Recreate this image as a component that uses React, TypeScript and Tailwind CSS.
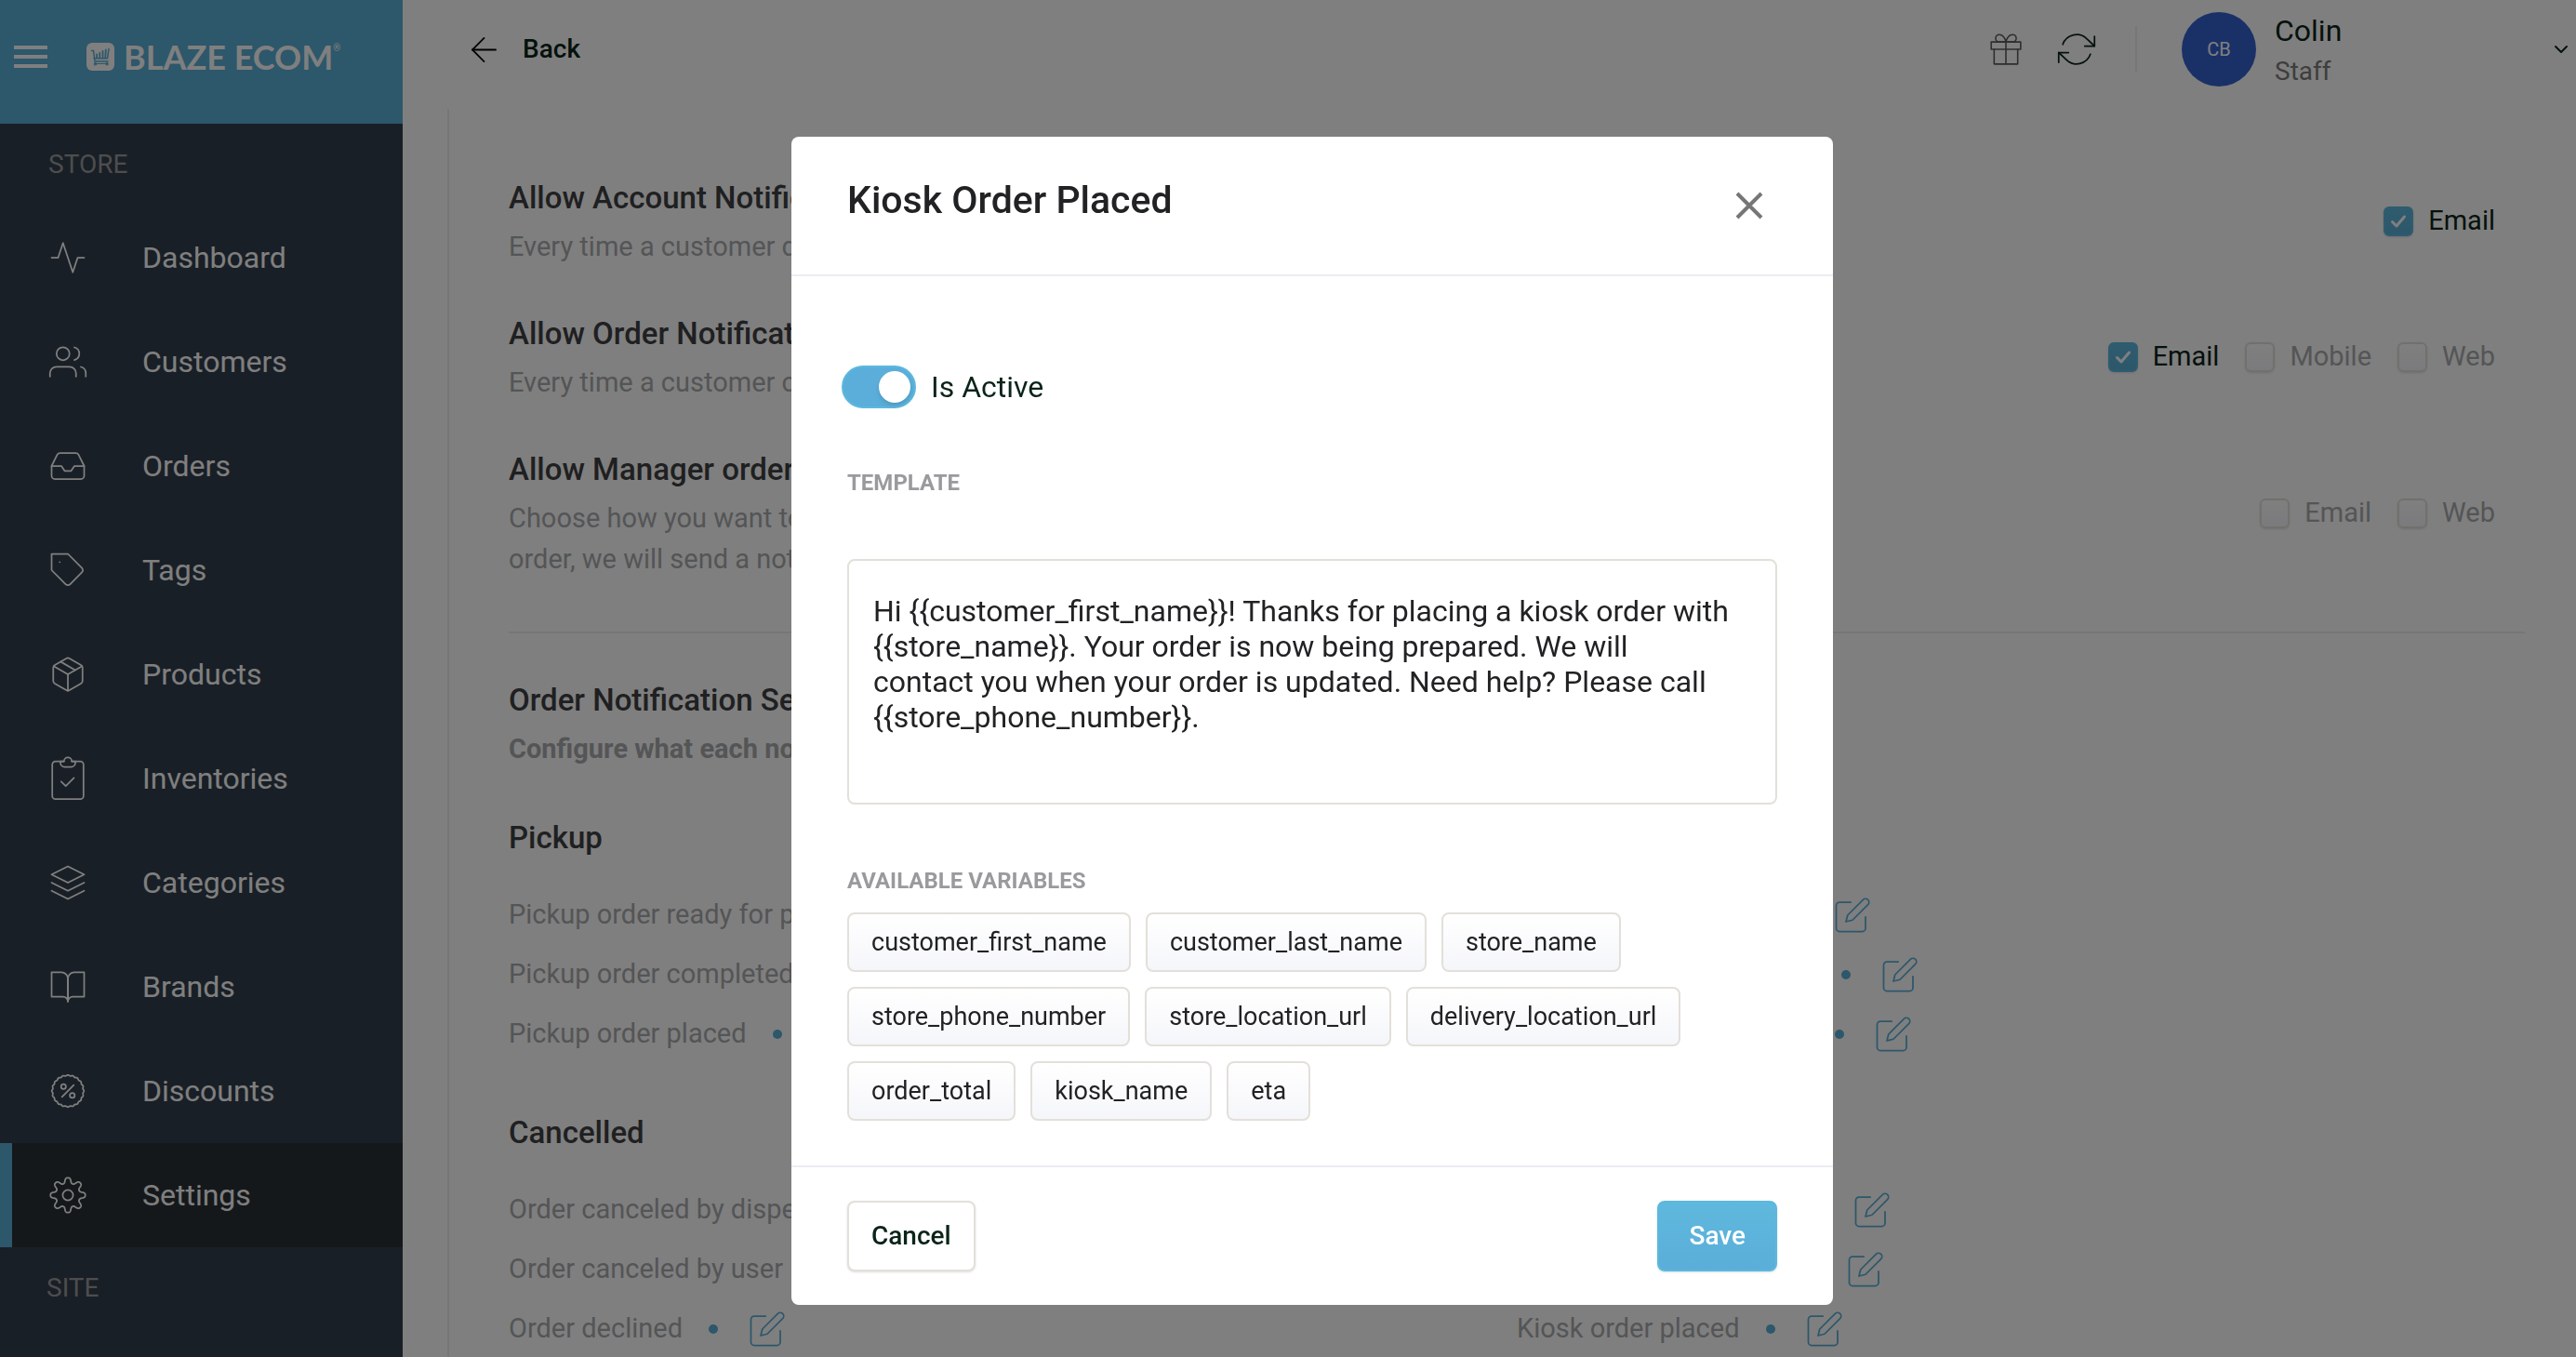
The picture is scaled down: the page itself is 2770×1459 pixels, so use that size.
import React, { useState } from "react";
import {
  FiActivity,
  FiArrowLeft,
  FiBookOpen,
  FiChevronDown,
  FiEdit,
  FiGift,
  FiInbox,
  FiLayers,
  FiPackage,
  FiRefreshCw,
  FiTag,
  FiUsers,
} from "react-icons/fi";

interface IconProps {
  className?: string;
  strokeWidth?: number;
}

interface Option {
  label: string;
  checked: boolean;
}

// closed wave around the centre of a 24x24 box, used for the gear and the badge outline
const wavePath = (teeth: number, radius: number, depth: number, sharpness: number) => {
  const steps = 240;
  const points: string[] = [];
  for (let i = 0; i < steps; i++) {
    const angle = (i / steps) * Math.PI * 2;
    const wave = Math.tanh(sharpness * Math.cos(teeth * angle)) / Math.tanh(sharpness);
    const r = radius + depth * wave;
    points.push(`${(12 + r * Math.sin(angle)).toFixed(2)} ${(12 - r * Math.cos(angle)).toFixed(2)}`);
  }
  return `M${points.join("L")}Z`;
};

const gearPath = wavePath(8, 9.1, 1.6, 1.5);
const badgePath = wavePath(20, 9.6, 0.25, 1);

function GearIcon({ className, strokeWidth = 1 }: IconProps) {
  return (
    <svg viewBox="0 0 24 24" fill="none" stroke="currentColor" strokeWidth={strokeWidth} strokeLinejoin="round" className={className}>
      <path d={gearPath} />
      <circle cx="12" cy="12" r="3.2" />
    </svg>
  );
}

function DiscountIcon({ className, strokeWidth = 1 }: IconProps) {
  return (
    <svg viewBox="0 0 24 24" fill="none" stroke="currentColor" strokeWidth={strokeWidth} strokeLinecap="round" className={className}>
      <path d={badgePath} />
      <path d="M8.4 15.6L15.6 8.4" />
      <circle cx="9.3" cy="9.3" r="1.5" />
      <circle cx="14.7" cy="14.7" r="1.5" />
    </svg>
  );
}

function ClipboardIcon({ className, strokeWidth = 1 }: IconProps) {
  return (
    <svg viewBox="0 0 24 28" fill="none" stroke="currentColor" strokeWidth={strokeWidth} strokeLinecap="round" strokeLinejoin="round" className={className}>
      <path d="M9.6 3.2H4.4a2 2 0 0 0-2 2v19.2a2 2 0 0 0 2 2h15.2a2 2 0 0 0 2-2V5.2a2 2 0 0 0-2-2h-5.2" />
      <path d="M7.4 3.2v.8a2.6 2.6 0 0 0 2.6 2.6h4a2.6 2.6 0 0 0 2.6-2.6v-.8h-2.2a2.4 2.4 0 0 0-4.8 0z" />
      <path d="M7.9 15.6l2.8 2.8 5-5" />
    </svg>
  );
}

function LogoIcon() {
  return (
    <svg viewBox="0 0 30 30" className="size-[30px]" aria-hidden="true">
      <rect width="30" height="30" rx="6" fill="#fff" />
      <g fill="none" stroke="#5aaed6" strokeLinecap="round">
        <path strokeWidth="1.5" d="M5.5 8.5h2l1.5 11.5h14M8 16.8h14.5L24 6.5" />
        <path strokeWidth="1.8" d="M11 12.5v3M14.2 11v4.5M17.5 9v6.5M20.8 7.5l-.5 8" />
        <path strokeWidth="1" d="M8.5 22.5h14" />
        <circle cx="9.5" cy="22.8" r="1.2" strokeWidth="1.2" />
        <circle cx="22" cy="22.8" r="1.2" strokeWidth="1.2" />
      </g>
    </svg>
  );
}

const navItems = [
  { label: "Dashboard", icon: FiActivity },
  { label: "Customers", icon: FiUsers },
  { label: "Orders", icon: FiInbox },
  { label: "Tags", icon: FiTag },
  { label: "Products", icon: FiPackage },
  { label: "Inventories", icon: ClipboardIcon, tall: true },
  { label: "Categories", icon: FiLayers },
  { label: "Brands", icon: FiBookOpen },
  { label: "Discounts", icon: DiscountIcon },
  { label: "Settings", icon: GearIcon, active: true },
];

const notificationRows = [
  {
    title: "Allow Account Notifications",
    lines: ["Every time a customer does an account action"],
    options: [{ label: "Email", checked: true }],
  },
  {
    title: "Allow Order Notifications",
    lines: ["Every time a customer creates an order"],
    options: [
      { label: "Email", checked: true },
      { label: "Mobile", checked: false },
      { label: "Web", checked: false },
    ],
  },
  {
    title: "Allow Manager order Notifications",
    lines: ["Choose how you want to be notified about each", "order, we will send a notification."],
    options: [
      { label: "Email", checked: false },
      { label: "Web", checked: false },
    ],
  },
];

const orderGroups = [
  { title: "Pickup", items: ["Pickup order ready for pickup", "Pickup order completed", "Pickup order placed"] },
  { title: "Delivery", items: ["Delivery order placed", "Delivery order completed", "Delivery order confirmed"] },
  { title: "Cancelled", items: ["Order canceled by dispensary", "Order canceled by user", "Order declined"] },
  { title: "Kiosk", items: ["Kiosk order completed", "Kiosk order confirmed", "Kiosk order placed"] },
];

const variables = [
  "customer_first_name",
  "customer_last_name",
  "store_name",
  "store_phone_number",
  "store_location_url",
  "delivery_location_url",
  "order_total",
  "kiosk_name",
  "eta",
];

const defaultTemplate = `Hi {{customer_first_name}}! Thanks for placing a kiosk order with {{store_name}}. Your order is now being prepared. We will
contact you when your order is updated. Need help? Please call {{store_phone_number}}.`;

function Sidebar() {
  return (
    <aside className="w-[433px] shrink-0 bg-[#323f4d] text-white">
      <div className="h-[133px] bg-[#5aaed6] flex items-start pt-[46px] pl-[15px]">
        <button aria-label="Toggle menu" className="flex flex-col gap-[6px] mt-[3px]">
          <span className="w-9 h-1 bg-white" />
          <span className="w-9 h-1 bg-white" />
          <span className="w-9 h-1 bg-white" />
        </button>
        <a href="#" className="flex items-center ml-[42px]">
          <LogoIcon />
          <span className="ml-[10px] font-[Lato] font-bold text-[36px] leading-[30px]">BLAZE ECOM</span>
          <span className="self-start text-[10px] leading-[12px]">®</span>
        </a>
      </div>
      <h2 className="h-[88px] flex items-center pl-[52px] text-[28px] text-[#9a9a9c]">STORE</h2>
      <nav>
        {navItems.map(({ label, icon: Icon, active, tall }) => (
          <a
            key={label}
            href="#"
            className={`h-28 flex items-center text-[32px] ${
              active ? "bg-[#2a3036] border-l-[13px] border-[#5aaed6] pl-[39px]" : "pl-[52px]"
            }`}
          >
            <Icon strokeWidth={1} className={tall ? "w-[42px] h-[49px]" : "size-[42px]"} />
            <span className="ml-[59px]">{label}</span>
          </a>
        ))}
      </nav>
      <h2 className="h-[88px] flex items-center pl-[50px] text-[28px] text-[#9a9a9c]">SITE</h2>
    </aside>
  );
}

function TopBar() {
  return (
    <header className="h-[117px] shrink-0 flex items-start justify-between pl-[66px] pr-1">
      <button className="h-[106px] flex items-center text-[28px] font-medium text-[#0b2418]">
        <FiArrowLeft strokeWidth={1} className="size-[43px] text-black" />
        <span className="ml-5">Back</span>
      </button>
      <div className="h-[106px] flex items-center">
        <button aria-label="Rewards">
          <FiGift strokeWidth={1} className="size-[38px] text-[#5c5c5c]" />
        </button>
        <button aria-label="Refresh" className="ml-[36px]">
          <FiRefreshCw strokeWidth={1} className="size-[42px] text-[#0b2418]" />
        </button>
        <div className="ml-[42px] w-[2px] h-[50px] bg-[#eeeeee]" />
        <div className="ml-12 size-20 rounded-full bg-[#3462d0] text-white text-[20px] flex items-center justify-center">CB</div>
        <div className="ml-5 pt-1 w-[296px]">
          <div className="text-[32px] leading-[44px] text-[#0b2418]">Colin</div>
          <div className="text-[28px] leading-[44px] text-[#7c7c7c]">Staff</div>
        </div>
        <button aria-label="Account menu">
          <FiChevronDown strokeWidth={2} className="size-[24px] text-[#0b2418]" />
        </button>
      </div>
    </header>
  );
}

function CheckOption({ label, checked: initial }: Option) {
  const [checked, setChecked] = useState(initial);

  return (
    <label className={`flex items-center gap-4 text-[29px] ${checked ? "text-[#0b2418]" : "text-[#a9abad]"}`}>
      <span className="relative size-8">
        <input
          type="checkbox"
          checked={checked}
          onChange={() => setChecked(!checked)}
          className="appearance-none block size-8 rounded-md border-2 border-[#e3e0d8] bg-linear-to-b from-white to-[#f5f6fa] shadow-sm checked:border-[#5cb8de] checked:from-[#5fb8de] checked:to-[#5aaed6]"
        />
        {checked && (
          <svg viewBox="0 0 32 32" fill="none" stroke="#fff" strokeWidth="3" strokeLinecap="round" strokeLinejoin="round" className="absolute inset-0 pointer-events-none">
            <path d="M9.5 16.5l4.5 4.5 8.5-10" />
          </svg>
        )}
      </span>
      {label}
    </label>
  );
}

function SettingsContent() {
  return (
    <section className="ml-12 border-l-2 border-[#ecedf5] pl-16 pr-[55px] pt-[66px] grow">
      <div className="flex flex-col gap-[42px]">
        {notificationRows.map((row) => (
          <div key={row.title} className="flex items-center justify-between pr-8">
            <div>
              <h3 className="text-[33px] leading-[60px] font-medium text-[#3e4042]">{row.title}</h3>
              {row.lines.map((line) => (
                <p key={line} className="text-[29px] leading-[44px] text-[#a9abad]">{line}</p>
              ))}
            </div>
            <div className="flex gap-7 pt-[6px]">
              {row.options.map((option) => (
                <CheckOption key={option.label} label={option.label} checked={option.checked} />
              ))}
            </div>
          </div>
        ))}
      </div>
      <hr className="mt-14 border-t-2 border-[#ecedf5]" />
      <h3 className="mt-[42px] text-[33px] leading-[60px] font-medium text-[#3e4042]">Order Notification Settings</h3>
      <p className="text-[29px] leading-[44px] font-bold text-[#a9abad]">Configure what each notification says</p>
      <div className="grid grid-cols-2">
        {orderGroups.map((group) => (
          <div key={group.title} className="pt-11">
            <h4 className="mb-[21px] text-[33px] leading-[60px] font-medium text-[#3e4042]">{group.title}</h4>
            <ul>
              {group.items.map((item) => (
                <li key={item} className="h-16 flex items-center text-[29px] text-[#a9abad]">
                  {item}
                  <span className="ml-7 size-[10px] rounded-full bg-[#5aaed6]" />
                  <button aria-label={`Edit ${item}`} className="ml-8">
                    <FiEdit strokeWidth={1} className="size-[42px] text-[#5aaed6]" />
                  </button>
                </li>
              ))}
            </ul>
          </div>
        ))}
      </div>
    </section>
  );
}

function TemplateModal() {
  const [active, setActive] = useState(true);
  const [template, setTemplate] = useState(defaultTemplate);

  return (
    <div className="fixed inset-0 bg-black/50 flex items-start justify-center pt-[147px] pl-[52px]">
      <div role="dialog" aria-labelledby="modal-title" className="w-[1120px] rounded-lg bg-white">
        <div className="h-[150px] flex items-start justify-between pl-[60px] pr-[68px] border-b-2 border-[#ecedf3]">
          <h1 id="modal-title" className="pt-[38px] text-[41px] leading-[60px] font-medium text-[#212223]">
            Kiosk Order Placed
          </h1>
          <button aria-label="Close" className="mt-[52px]">
            <svg viewBox="0 0 44 44" stroke="#767676" strokeWidth="4" className="size-11">
              <path d="M9 9l26 26M35 9L9 35" />
            </svg>
          </button>
        </div>

        <div className="px-[60px] pt-24 pb-[48px]">
          <label className="-ml-[6px] flex items-center gap-4 text-[32px] leading-[46px] text-[#0b2418]">
            <input
              type="checkbox"
              role="switch"
              checked={active}
              onChange={() => setActive(!active)}
              className="appearance-none w-20 h-[46px] rounded-full border-2 border-[#5cb8de] bg-[#5aaed9] p-[4px] pl-[38px] before:block before:size-[34px] before:rounded-full before:bg-white before:shadow-md"
            />
            Is Active
          </label>

          <label htmlFor="template" className="block mt-[62px] text-[24px] leading-9 font-bold text-[#9a9a9e]">
            TEMPLATE
          </label>
          <textarea
            id="template"
            value={template}
            onChange={(e) => setTemplate(e.target.value)}
            className="block mt-[64px] w-full h-[264px] resize-none rounded-lg border-2 border-[#e3e0da] pt-[35px] px-[26px] text-[32px] leading-[38px] text-[#212223] outline-none"
          />

          <h2 className="mt-[64px] text-[24px] leading-9 font-bold text-[#9a9a9e]">AVAILABLE VARIABLES</h2>
          <div className="mt-4 flex flex-wrap gap-4">
            {variables.map((name) => (
              <button
                key={name}
                className="h-16 px-6 rounded-lg border-2 border-[#e3e0da] bg-linear-to-b from-white to-[#f5f6fa] text-[27px] text-[#212223]"
              >
                {name}
              </button>
            ))}
          </div>
        </div>

        <div className="flex items-center justify-between px-[60px] py-9 border-t-2 border-[#ecedf3]">
          <button className="h-[76px] px-6 rounded-lg border-2 border-[#e3e0da] bg-white shadow-sm text-[28px] font-medium text-[#0b2418]">
            Cancel
          </button>
          <button className="h-[76px] px-8 rounded-lg border-2 border-[#5cb8de] bg-linear-to-b from-[#5fb8de] to-[#5aaed9] shadow-sm text-[28px] font-medium text-white">
            Save
          </button>
        </div>
      </div>
    </div>
  );
}

export default function App() {
  return (
    <div className="h-screen overflow-hidden flex bg-white font-[Roboto,sans-serif]">
      <Sidebar />
      <main className="grow flex flex-col">
        <TopBar />
        <SettingsContent />
      </main>
      <TemplateModal />
    </div>
  );
}
